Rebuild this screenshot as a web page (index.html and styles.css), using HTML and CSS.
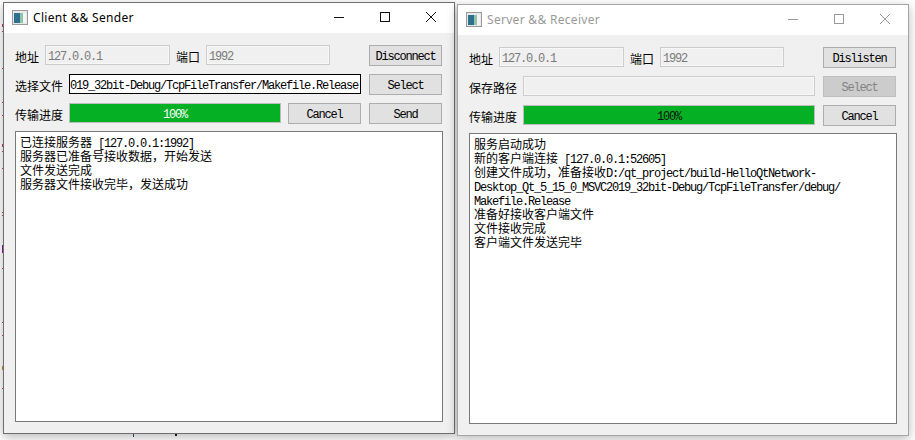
FILE: index.html
```html
<!DOCTYPE html>
<html lang="zh">
<head>
<meta charset="utf-8">
<title>Client && Sender</title>
<link rel="stylesheet" href="styles.css">
</head>
<body>
<svg class="backdrop" viewBox="0 0 915 440" aria-hidden="true">
  <g fill="#b5533f">
    <rect x="2" y="24" width="2" height="3" fill="#c8446a"/><rect x="2" y="31" width="2" height="1" fill="#c8446a"/>
    <rect x="2" y="68" width="2" height="1"/><rect x="2" y="102" width="2" height="1"/><rect x="2" y="115" width="2" height="1"/>
    <rect x="2" y="144" width="2" height="3" fill="#c8446a"/><rect x="2" y="151" width="2" height="1" fill="#c8446a"/>
    <rect x="2" y="168" width="2" height="1"/><rect x="2" y="212" width="2" height="1"/><rect x="2" y="215" width="2" height="1"/>
    <rect x="2" y="245" width="2" height="8" fill="#a0109a"/>
    <rect x="2" y="268" width="2" height="1"/><rect x="2" y="322" width="2" height="1"/><rect x="2" y="335" width="2" height="1"/>
    <rect x="2" y="366" width="2" height="4" fill="#b79a10"/><rect x="2" y="388" width="2" height="1"/>
    <rect x="133" y="434" width="1" height="3" fill="#24506e"/><rect x="175" y="434" width="2" height="2" fill="#222"/>
  </g>
</svg>

<section class="window window-client">
  <header class="titlebar">
    <svg class="app-icon" viewBox="0 0 16 16" aria-hidden="true"><rect x="0.5" y="0.5" width="15" height="14" fill="#e8e8e8" stroke="#9a9a9a"/><rect x="2" y="3" width="6" height="10" fill="#2f6f8f"/><rect x="8" y="3" width="3" height="10" fill="#8fc4a8"/><rect x="11" y="3" width="3" height="10" fill="#f4f4f4"/></svg>
    <span class="title">Client &amp;&amp; Sender</span>
    <div class="caption">
      <svg viewBox="0 0 46 20"><path d="M18 9.500H28" stroke="#111" fill="none"/></svg>
      <svg viewBox="0 0 46 20"><rect x="18.500" y="4.500" width="9" height="9" stroke="#111" fill="none"/></svg>
      <svg viewBox="0 0 46 20"><path d="M18 4L28 14M28 4L18 14" stroke="#111" fill="none"/></svg>
    </div>
  </header>
  <div class="body">
    <div class="row">
      <span class="label label-addr">地址</span>
      <div class="input input-off field-ip"><span class="mono">127.0.0.1</span></div>
      <span class="label label-port">端口</span>
      <div class="input input-off field-port"><span class="mono">1992</span></div>
      <button class="btn btn-end"><span class="mono">Disconnect</span></button>
    </div>
    <div class="row">
      <span class="label label-long">选择文件</span>
      <div class="input input-on field-wide"><span class="mono">019_32bit-Debug/TcpFileTransfer/Makefile.Release</span></div>
      <button class="btn btn-end"><span class="mono">Select</span></button>
    </div>
    <div class="row">
      <span class="label label-long">传输进度</span>
      <div class="progress progress-short"><span class="mono">100%</span></div>
      <button class="btn btn-mid"><span class="mono">Cancel</span></button>
      <button class="btn btn-end"><span class="mono">Send</span></button>
    </div>
    <div class="log">
      <div class="line">已连接服务器<span class="mono"> [127.0.0.1:1992]</span></div>
      <div class="line">服务器已准备号接收数据，开始发送</div>
      <div class="line">文件发送完成</div>
      <div class="line">服务器文件接收完毕，发送成功</div>
    </div>
  </div>
</section>

<section class="window window-server">
  <header class="titlebar">
    <svg class="app-icon" viewBox="0 0 16 16" aria-hidden="true"><rect x="0.5" y="0.5" width="15" height="14" fill="#e8e8e8" stroke="#9a9a9a"/><rect x="2" y="3" width="6" height="10" fill="#2f6f8f"/><rect x="8" y="3" width="3" height="10" fill="#8fc4a8"/><rect x="11" y="3" width="3" height="10" fill="#f4f4f4"/></svg>
    <span class="title">Server &amp;&amp; Receiver</span>
    <div class="caption">
      <svg viewBox="0 0 46 20"><path d="M18 9.500H28" stroke="#999" fill="none"/></svg>
      <svg viewBox="0 0 46 20"><rect x="18.500" y="4.500" width="9" height="9" stroke="#999" fill="none"/></svg>
      <svg viewBox="0 0 46 20"><path d="M18 4L28 14M28 4L18 14" stroke="#999" fill="none"/></svg>
    </div>
  </header>
  <div class="body">
    <div class="row">
      <span class="label label-addr">地址</span>
      <div class="input input-off field-ip"><span class="mono">127.0.0.1</span></div>
      <span class="label label-port">端口</span>
      <div class="input input-off field-port"><span class="mono">1992</span></div>
      <button class="btn btn-end"><span class="mono">Dislisten</span></button>
    </div>
    <div class="row">
      <span class="label label-long">保存路径</span>
      <div class="input input-off field-wide"></div>
      <button class="btn btn-end btn-off"><span class="mono">Select</span></button>
    </div>
    <div class="row">
      <span class="label label-long">传输进度</span>
      <div class="progress progress-wide"><span class="mono">100%</span></div>
      <button class="btn btn-end"><span class="mono">Cancel</span></button>
    </div>
    <div class="log">
      <div class="line">服务启动成功</div>
      <div class="line">新的客户端连接<span class="mono"> [127.0.0.1:52605]</span></div>
      <div class="line">创建文件成功，准备接收<span class="mono">D:/qt_project/build-HelloQtNetwork-</span></div>
      <div class="line"><span class="mono">Desktop_Qt_5_15_0_MSVC2019_32bit-Debug/TcpFileTransfer/debug/</span></div>
      <div class="line"><span class="mono">Makefile.Release</span></div>
      <div class="line">准备好接收客户端文件</div>
      <div class="line">文件接收完成</div>
      <div class="line">客户端文件发送完毕</div>
    </div>
  </div>
</section>
</body>
</html>
```
FILE: styles.css
```css
* { box-sizing: border-box; }
html, body { margin: 0; height: 100%; }
body {
  position: relative;
  width: 915px;
  height: 440px;
  overflow: hidden;
  background: #fff;
  font-family: "Noto Sans CJK SC", sans-serif;
  font-size: 12px;
  color: #000;
}
.backdrop { position: absolute; left: 0; top: 0; width: 915px; height: 440px; }
.window {
  position: absolute;
  width: 452px;
  height: 432px;
  background: #f0f0f0;
  display: flex;
  flex-direction: column;
  box-shadow: 0 3px 10px rgba(0,0,0,.28);
}
.window-client { left: 3px; top: 2px; border: 1px solid #6f6f6f; }
.window-server { left: 457px; top: 4px; border: 1px solid #a5a5a5; }
.titlebar {
  flex: none;
  height: 30px;
  background: #fff;
  display: flex;
  align-items: center;
  padding-left: 8px;
}
.app-icon { width: 16px; height: 16px; flex: none; }
.title {
  margin-left: 5px;
  padding-bottom: 2px;
  font-family: "Noto Sans", sans-serif;
  font-size: 12px;
  letter-spacing: .3px;
}
.window-server .title { color: #999; }
.caption { margin-left: auto; display: flex; }
.caption svg { width: 46px; height: 20px; display: block; }
.body {
  flex: 1;
  min-height: 0;
  display: flex;
  flex-direction: column;
  padding: 12px 12px 11px 11px;
}
.row {
  flex: none;
  display: flex;
  align-items: flex-start;
  height: 21px;
  margin-bottom: 8px;
}
.row:nth-child(3) { margin-bottom: 7px; }
.label { flex: none; white-space: nowrap; line-height: 23px; }
.label-addr { width: 30px; }
.label-port { width: 30px; margin-left: 6px; }
.label-long { width: 54px; }
.mono {
  font-family: "Liberation Mono", "DejaVu Sans Mono", monospace;
  font-size: 12px;
  letter-spacing: -1.2px;
}
.input {
  flex: none;
  height: 20px;
  border: 1px solid #ccc;
  line-height: 18px;
  padding: 0 2px;
  overflow: hidden;
  white-space: nowrap;
}
.input-off { background: #f0f0f0; color: #7a7a7a; box-shadow: inset 0 0 0 1px #f7f7f7; }
.input-on { background: #fff; border-color: #000; padding: 0; }
.field-ip { width: 125px; }
.field-port { width: 124px; }
.field-wide { width: 292px; }
.btn {
  flex: none;
  width: 73px;
  height: 21px;
  padding: 1px 0 0;
  background: #e1e1e1;
  border: 1px solid #adadad;
  color: #000;
  line-height: 18px;
}
.btn-end { margin-left: auto; }
.btn-mid { margin-left: 7px; }
.btn-off { background: #ccc; border-color: #bfbfbf; color: #838383; }
.progress {
  flex: none;
  height: 20px;
  background: #06b025;
  border: 1px solid #bcbcbc;
  text-align: center;
  line-height: 17px;
}
.progress-short { width: 212px; color: #fff; }
.progress-wide { width: 292px; color: #111; }
.log {
  flex: 1;
  min-height: 0;
  margin-right: -1px;
  background: #fff;
  border: 1px solid #7a7a7a;
  padding: 3px 4px;
}
.line { height: 14px; line-height: 14px; white-space: pre; }
```
